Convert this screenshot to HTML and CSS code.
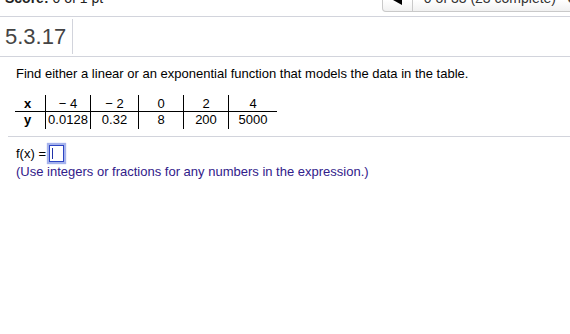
FILE: index.html
```html
<!DOCTYPE html>
<html lang="en">
<head>
  <meta charset="UTF-8" />
  <title>5.3.17</title>
  <link rel="stylesheet" href="styles.css">
</head>
<body>

  <div class="topbar">
    <div class="score"><b>Score:</b> 0 of 1 pt</div>
    <div class="nav">
      <span class="prev"><span class="arrow"></span></span>
      <span class="count">0 of 33 (23 complete)</span>
      <span class="caret">&#9662;</span>
    </div>
  </div>

  <div class="titlebar">
    <div class="qnum">5.3.17</div>
  </div>

  <div class="question">
    <p class="prompt">Find either a linear or an exponential function that models the data in the table.</p>

    <table class="data">
      <colgroup>
        <col class="c-head"><col class="c2"><col class="c3"><col class="c4"><col class="c5"><col class="c6">
      </colgroup>
      <tr class="row-x">
        <th>x</th><td>&minus; 4</td><td>&minus; 2</td><td>0</td><td>2</td><td>4</td>
      </tr>
      <tr class="row-y">
        <th>y</th><td>0.0128</td><td>0.32</td><td>8</td><td>200</td><td>5000</td>
      </tr>
    </table>
  </div>

  <div class="answer">
    <div class="answer-row">
      <span>f(x) =</span>
      <span class="input"><span class="cursor"></span></span>
    </div>
    <div class="hint">(Use integers or fractions for any numbers in the expression.)</div>
  </div>

</body>
</html>
```

FILE: styles.css
```css
*, *::before, *::after { box-sizing: border-box; margin: 0; padding: 0; }

body {
  background: #fff;
  color: #000;
  font-family: "Liberation Sans", Arial, sans-serif;
  font-size: 13px;
  line-height: 15px;
}

/* Top bar (scrolled, cut at the top) */
.topbar {
  height: 17px;
  border-bottom: 1px solid #d2d4dc;
  display: flex;
  justify-content: space-between;
  align-items: flex-start;
  overflow: hidden;
}

.score {
  font-size: 14px;
  line-height: 14px;
  margin-top: -9px;
  padding-left: 5px;
  color: #222;
}

.nav {
  height: 12px;
  width: 192px;
  margin-right: -4px;
  display: flex;
  align-items: flex-start;
  border: 1px solid #c9c9c9;
  border-top: none;
  border-radius: 0 0 4px 4px;
  background: linear-gradient(#ffffff, #f1f1f1);
  overflow: hidden;
  font-size: 14px;
  line-height: 14px;
  color: #333;
}

.prev {
  width: 34px;
  height: 11px;
  border-right: 1px solid #c9c9c9;
  display: flex;
  justify-content: center;
  align-items: flex-end;
  overflow: hidden;
  padding-bottom: 6px;
}

/* left-pointing triangle, top half scrolled away */
.arrow {
  flex-shrink: 0;
  width: 0;
  height: 0;
  border-top: 5px solid transparent;
  border-bottom: 5px solid transparent;
  border-right: 9px solid #000;
}

.count, .caret { margin-top: -9px; }

.count { padding-left: 11px; white-space: nowrap; }

.caret { padding-left: 10px; color: #444; }

/* Question number bar */
.titlebar {
  height: 40px;
  border-bottom: 1px solid #d2d4dc;
  display: flex;
  align-items: flex-start;
}

.qnum {
  height: 35px;
  margin-top: 2px;
  padding: 0 6px 0 5px;
  border-right: 1px solid #d2d4dc;
  display: flex;
  align-items: center;
  font-size: 22px;
  color: #444;
}

/* Question body */
.question {
  padding: 9px 0 0 15px;
}

.prompt {
  padding-left: 1px;
  margin-bottom: 14px;
}

.data {
  table-layout: fixed;
  border-collapse: separate;
  border-spacing: 0;
  width: 262px;
}

.c-head { width: 30px; }
.c2 { width: 45px; }
.c3 { width: 48px; }
.c4 { width: 45px; }
.c5 { width: 45px; }
.c6 { width: 49px; }

.data th, .data td {
  text-align: center;
  font-weight: normal;
  white-space: nowrap;
  padding: 0;
}

.data th {
  font-weight: bold;
  padding-right: 5px;
}

.data td { border-left: 1px solid #000; }

.row-x th, .row-x td {
  height: 17px;
  padding-top: 1px;
  border-bottom: 1px solid #000;
}

.row-y th, .row-y td {
  height: 17px;
  padding-bottom: 2px;
}

/* Answer area */
.answer {
  margin: 7px 0 0 8px;
  border-top: 1px solid #d2d4dc;
  padding: 6px 0 0 8px;
}

.answer-row {
  height: 21px;
  display: flex;
  align-items: center;
}

.input {
  width: 15px;
  height: 17px;
  margin-left: 3px;
  border: 1px solid #2d45c4;
  box-shadow: 0 0 1px 2px #a6b3ec;
  display: flex;
  align-items: center;
  padding-left: 2px;
}

.cursor {
  width: 1px;
  height: 11px;
  background: #2133a8;
}

.hint {
  color: #31208a;
}
```
